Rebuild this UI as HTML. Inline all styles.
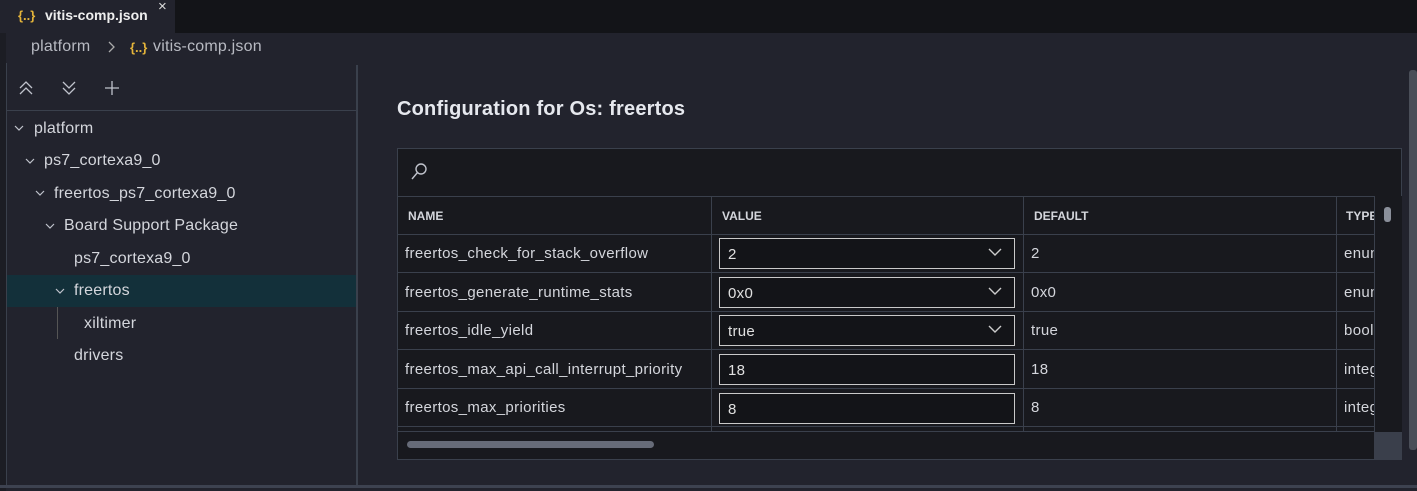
<!DOCTYPE html>
<html><head><meta charset="utf-8"><style>
*{margin:0;padding:0;box-sizing:border-box}
body{width:1417px;height:491px;background:#22232d;font-family:"Liberation Sans",sans-serif;color:#d4d6dc;position:relative;overflow:hidden;font-size:15px}
.a{position:absolute}
.tab{left:0;top:0;width:175px;height:33px;background:#22232d}
.topblack{left:175px;top:0;width:1242px;height:33px;background:#131418}
.t{position:absolute;white-space:nowrap}
.tr{font-size:16px;letter-spacing:0.2px}
.tb{letter-spacing:0.35px}
.br{color:#e4b43a;font-weight:bold;font-size:13px}
.row{position:absolute;left:397px;width:977px;height:1px;background:#3a404c}
.vl{position:absolute;width:1px;background:#3a404c}
.inp{position:absolute;left:719px;width:296px;height:31px;border:1.5px solid #c9c9c9;background:#131418;color:#e0e0e0;padding:7px 0 0 8px;letter-spacing:0.3px}
.chev{position:absolute;right:12px;top:8px}
</style></head><body>
<div class="a topblack"></div>
<div class="a tab"></div>
<div class="t br" style="left:18px;top:8px">{..}</div>
<div class="t" style="left:45px;top:7px;font-weight:bold;font-size:14px;color:#eee">vitis-comp.json</div>
<div class="t" style="left:158px;top:-2px;font-size:15px;color:#ddd">×</div>
<div class="a" style="left:0;top:33px;width:6px;height:458px;background:#1c1d24"></div>
<div class="t tr" style="left:31px;top:38px;color:#b8bac2">platform</div>
<svg class="a" style="left:107px;top:41px" width="10" height="12" fill="none" stroke="#aaa" stroke-width="1.3"><path d="M2 1l5 5-5 5"/></svg>
<div class="t br" style="left:130px;top:40px">{..}</div>
<div class="t tr" style="left:153px;top:38px;color:#b8bac2">vitis-comp.json</div>
<!-- left panel -->
<div class="a" style="left:6px;top:63px;width:1px;height:423px;background:#3a404c"></div>
<div class="a" style="left:356px;top:65px;width:2px;height:421px;background:#3a404c"></div>
<div class="a" style="left:6px;top:110px;width:351px;height:1px;background:#3a404c"></div>
<div class="a" style="left:0;top:485px;width:1417px;height:3px;background:#3d4250"></div>
<svg class="a" style="left:18px;top:80px" width="110" height="16" fill="none" stroke="#c0c3cc" stroke-width="1.3">
<path d="M2 8l6-6 6 6M2 14l6-6 6 6"/><path d="M45 2l6 6 6-6M45 8l6 6 6-6"/><path d="M94 1v14M87 8h14"/></svg>
<div class="a" style="left:7px;top:275px;width:349px;height:32px;background:#13303a"></div>
<div class="a" style="left:57px;top:307px;width:1px;height:32px;background:#555"></div>
<svg class="a" width="360" height="300" style="left:0;top:110px" fill="none" stroke="#c0c3cc" stroke-width="1.2">
<path d="M15 16l4 4 4-4M26 49l4 4 4-4M36 81l4 4 4-4M46 114l4 4 4-4M56 179l4 4 4-4"/></svg>
<div class="t tr" style="left:34px;top:120px">platform</div>
<div class="t tr" style="left:44px;top:152px">ps7_cortexa9_0</div>
<div class="t tr" style="left:54px;top:185px">freertos_ps7_cortexa9_0</div>
<div class="t tr" style="left:64px;top:217px">Board Support Package</div>
<div class="t tr" style="left:74px;top:250px">ps7_cortexa9_0</div>
<div class="t tr" style="left:74px;top:282px">freertos</div>
<div class="t tr" style="left:84px;top:315px">xiltimer</div>
<div class="t tr" style="left:74px;top:347px">drivers</div>
<!-- right -->
<div class="t" style="left:397px;top:98px;font-size:20px;font-weight:bold;color:#e6e8ee;letter-spacing:0.2px">Configuration for Os: freertos</div>
<div class="a" style="left:397px;top:148px;width:1005px;height:312px;background:#18191e;border:1px solid #3a404c"></div>
<svg class="a" style="left:410px;top:162px" width="18" height="20" fill="none" stroke="#c0c3cc" stroke-width="1.4"><circle cx="11" cy="7" r="5"/><path d="M7.5 10.5L2 17"/></svg>
<div class="row" style="top:196px;width:1005px"></div>
<div class="row" style="top:234px"></div>
<div class="row" style="top:272px"></div>
<div class="row" style="top:311px"></div>
<div class="row" style="top:349px"></div>
<div class="row" style="top:388px"></div>
<div class="row" style="top:426px"></div>
<div class="row" style="top:431px"></div>
<div class="vl" style="left:711px;top:196px;height:235px"></div>
<div class="vl" style="left:1023px;top:196px;height:235px"></div>
<div class="vl" style="left:1336px;top:196px;height:235px"></div>
<div class="a" style="left:1374px;top:196px;width:28px;height:264px;background:#18191e;border-left:1px solid #3a404c"></div>
<div class="a" style="left:1374px;top:432px;width:28px;height:28px;background:#3a3f4b"></div>
<div class="a" style="left:1384px;top:207px;width:7px;height:15px;border-radius:3px;background:#8a8f9a"></div>
<div class="a" style="left:407px;top:441px;width:247px;height:7px;border-radius:4px;background:#666b78"></div>
<div class="a" style="left:1409px;top:70px;width:8px;height:380px;border-radius:3px;background:#4a4e58"></div>
<div class="t" style="left:408px;top:209px;font-size:12px;font-weight:bold">NAME</div>
<div class="t" style="left:722px;top:209px;font-size:12px;font-weight:bold">VALUE</div>
<div class="t" style="left:1034px;top:209px;font-size:12px;font-weight:bold">DEFAULT</div>
<div class="t" style="left:1346px;top:209px;font-size:12px;font-weight:bold;width:28px;overflow:hidden">TYPE</div>
<div class="t tb" style="left:405px;top:245px">freertos_check_for_stack_overflow</div>
<div class="t tb" style="left:405px;top:284px">freertos_generate_runtime_stats</div>
<div class="t tb" style="left:405px;top:322px">freertos_idle_yield</div>
<div class="t tb" style="left:405px;top:361px">freertos_max_api_call_interrupt_priority</div>
<div class="t tb" style="left:405px;top:399px">freertos_max_priorities</div>
<div class="inp" style="top:238px">2<svg class="chev" width="14" height="10" fill="none" stroke="#ccc" stroke-width="1.4"><path d="M1 2l6 6 6-6"/></svg></div>
<div class="inp" style="top:277px">0x0<svg class="chev" width="14" height="10" fill="none" stroke="#ccc" stroke-width="1.4"><path d="M1 2l6 6 6-6"/></svg></div>
<div class="inp" style="top:315px">true<svg class="chev" width="14" height="10" fill="none" stroke="#ccc" stroke-width="1.4"><path d="M1 2l6 6 6-6"/></svg></div>
<div class="inp" style="top:354px">18</div>
<div class="inp" style="top:393px">8</div>
<div class="t tb" style="left:1031px;top:245px">2</div>
<div class="t tb" style="left:1031px;top:284px">0x0</div>
<div class="t tb" style="left:1031px;top:322px">true</div>
<div class="t tb" style="left:1031px;top:361px">18</div>
<div class="t tb" style="left:1031px;top:399px">8</div>
<div class="t tb" style="left:1344px;top:245px;width:30px;overflow:hidden">enum</div>
<div class="t tb" style="left:1344px;top:284px;width:30px;overflow:hidden">enum</div>
<div class="t tb" style="left:1344px;top:322px;width:30px;overflow:hidden">bool</div>
<div class="t tb" style="left:1344px;top:361px;width:30px;overflow:hidden">integer</div>
<div class="t tb" style="left:1344px;top:399px;width:30px;overflow:hidden">integer</div>
</body></html>
